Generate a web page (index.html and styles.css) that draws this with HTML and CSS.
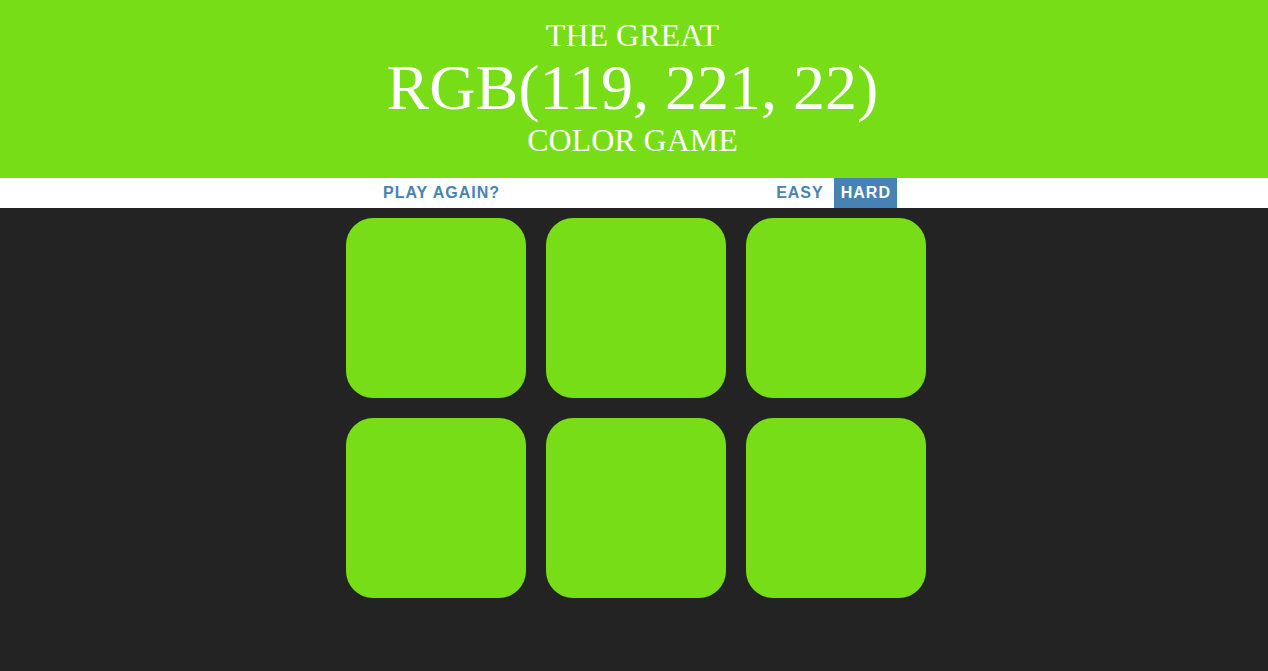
FILE: index.html
```html
<!DOCTYPE html>
<html lang="en">
<head>
    <meta charset="UTF-8">
    <meta name="viewport" content="width=device-width, initial-scale=1.0">
    <title>Color Game</title>
    <link rel="stylesheet" href="styles.css">
</head>
<body>
    <h1 class="banner">
        <span class="banner-line">The Great</span>
        <span class="color-display">RGB(119, 221, 22)</span>
        <span class="banner-line">Color Game</span>
    </h1>
    <div class="stripe">
        <button class="reset">Play Again?</button>
        <span class="message"></span>
        <button class="mode">Easy</button>
        <button class="mode selected">Hard</button>
    </div>
    <div class="board">
        <div class="square"></div>
        <div class="square"></div>
        <div class="square"></div>
        <div class="square"></div>
        <div class="square"></div>
        <div class="square"></div>
    </div>
</body>
</html>
```

FILE: styles.css
```css
body {
    background-color: #232323;
    margin: 0;
    font-family: "Liberation Sans", Arial, sans-serif;
}
.banner {
    margin: 0;
    padding: 18px 3px 20px 0;
    text-align: center;
    font-family: "Liberation Serif", "Times New Roman", serif;
    font-weight: normal;
    font-size: 32px;
    color: white;
    background: #77dd16;
    text-transform: uppercase;
}
.banner span {
    display: block;
}
.banner-line {
    line-height: 35px;
}
.color-display {
    font-size: 200%;
    line-height: 70px;
}
.stripe {
    display: flex;
    justify-content: center;
    gap: 4px;
    height: 30px;
    padding-left: 6px;
    background: white;
}
.message {
    width: 256px;
}
button {
    border: none;
    background: none;
    text-transform: uppercase;
    height: 100%;
    padding: 0 6px;
    font-family: "Liberation Sans", Arial, sans-serif;
    font-weight: 700;
    font-size: 16px;
    color: steelblue;
    letter-spacing: 1px;
    outline: none;
    cursor: pointer;
}
.selected {
    padding: 0 6px 0 7px;
    color: white;
    background: steelblue;
}
.board {
    display: grid;
    grid-template-columns: repeat(3, 180px);
    gap: 20px;
    width: 580px;
    margin: 10px auto 0;
    padding-left: 4px;
}
.square {
    height: 180px;
    border-radius: 27px;
    background: #77dd16;
}
```
